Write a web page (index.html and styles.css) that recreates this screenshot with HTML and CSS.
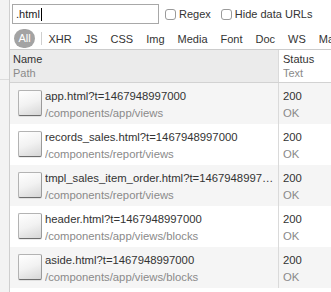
FILE: index.html
```html
<!DOCTYPE html>
<html>
<head>
<meta charset="utf-8">
<link rel="stylesheet" href="styles.css">
</head>
<body>
<div class="sidebar"><div class="sidebar-top"></div></div>
<div class="main">
  <div class="toolbar">
    <div class="search-row">
      <div class="search-input">.html<span class="caret"></span></div>
      <label class="check"><span class="box"></span>Regex</label>
      <label class="check"><span class="box"></span>Hide data URLs</label>
    </div>
    <div class="filter-row">
      <span class="pill">All</span>
      <span class="sep"></span>
      <span class="filter">XHR</span>
      <span class="filter">JS</span>
      <span class="filter">CSS</span>
      <span class="filter">Img</span>
      <span class="filter">Media</span>
      <span class="filter">Font</span>
      <span class="filter">Doc</span>
      <span class="filter">WS</span>
      <span class="filter">Manifest</span>
    </div>
  </div>
  <div class="table">
    <div class="head">
      <div class="hcell-name"><div class="primary">Name</div><div class="secondary">Path</div></div>
      <div class="hcell-status"><div class="primary">Status</div><div class="secondary">Text</div></div>
    </div>
    <div class="row odd">
      <div class="cell-name"><span class="icon"></span><div class="texts"><div class="primary">app.html?t=1467948997000</div><div class="secondary">/components/app/views</div></div></div>
      <div class="cell-status"><div class="primary">200</div><div class="secondary">OK</div></div>
    </div>
    <div class="row">
      <div class="cell-name"><span class="icon"></span><div class="texts"><div class="primary">records_sales.html?t=1467948997000</div><div class="secondary">/components/report/views</div></div></div>
      <div class="cell-status"><div class="primary">200</div><div class="secondary">OK</div></div>
    </div>
    <div class="row odd">
      <div class="cell-name"><span class="icon"></span><div class="texts"><div class="primary">tmpl_sales_item_order.html?t=1467948997000</div><div class="secondary">/components/report/views</div></div></div>
      <div class="cell-status"><div class="primary">200</div><div class="secondary">OK</div></div>
    </div>
    <div class="row">
      <div class="cell-name"><span class="icon"></span><div class="texts"><div class="primary">header.html?t=1467948997000</div><div class="secondary">/components/app/views/blocks</div></div></div>
      <div class="cell-status"><div class="primary">200</div><div class="secondary">OK</div></div>
    </div>
    <div class="row odd">
      <div class="cell-name"><span class="icon"></span><div class="texts"><div class="primary">aside.html?t=1467948997000</div><div class="secondary">/components/app/views/blocks</div></div></div>
      <div class="cell-status"><div class="primary">200</div><div class="secondary">OK</div></div>
    </div>
  </div>
</div>
</body>
</html>
```
FILE: styles.css
```css
html, body {
  margin: 0;
  padding: 0;
  height: 292px;
  overflow: hidden;
  background: #fff;
}
body {
  display: flex;
  font-family: "Liberation Sans", Arial, sans-serif;
  font-size: 11px;
  color: #333;
}
.sidebar {
  width: 9px;
  flex: none;
  background: #f3f3f3;
  border-right: 1px solid #cfcfcf;
}
.sidebar-top {
  height: 79px;
  border-bottom: 1px solid #dcdcdc;
}
.main {
  flex: 1;
  min-width: 0;
  overflow: hidden;
}
.toolbar {
  padding: 4px 0 0 2px;
  height: 49px;
  box-sizing: border-box;
}
.search-row {
  display: flex;
  align-items: center;
  height: 20px;
  white-space: nowrap;
}
.search-input {
  width: 147px;
  height: 20px;
  box-sizing: border-box;
  border: 1px solid #a8a8a8;
  padding: 0 3px;
  font-size: 11px;
  line-height: 18px;
  color: #222;
  display: flex;
  align-items: center;
}
.caret {
  display: inline-block;
  width: 1px;
  height: 13px;
  background: #000;
  margin-left: 1px;
}
.check {
  display: flex;
  align-items: center;
  color: #333;
  margin-left: 6px;
}
.check + .check {
  margin-left: 10px;
}
.box {
  width: 11px;
  height: 11px;
  box-sizing: border-box;
  border: 1px solid #9a9a9a;
  border-radius: 3px;
  background: #fff;
  margin-right: 3px;
}
.filter-row {
  display: flex;
  align-items: center;
  margin-top: 5px;
  height: 19px;
  padding-left: 2px;
  white-space: nowrap;
}
.pill {
  width: 21px;
  height: 19px;
  border-radius: 10px;
  background: #a3a3a3;
  color: #fff;
  text-align: center;
  line-height: 19px;
  flex: none;
}
.sep {
  width: 1px;
  height: 13px;
  background: #cfcfcf;
  margin-left: 6px;
  flex: none;
}
.filter {
  padding: 0 6.5px;
  color: #333;
  flex: none;
}
.table {
  border-top: 1px solid #cccccc;
}
.head {
  display: flex;
  height: 32px;
  border-bottom: 1px solid #d2d2d2;
}
.hcell-name {
  width: 268px;
  flex: none;
  box-sizing: border-box;
  background: #ebebeb;
  padding: 2px 0 0 3px;
  line-height: 14px;
}
.hcell-status {
  flex: 1;
  border-left: 1px solid #dadada;
  padding: 2px 0 0 4px;
  line-height: 14px;
  background: #fff;
}
.primary {
  color: #333;
  white-space: nowrap;
  overflow: hidden;
  text-overflow: ellipsis;
}
.secondary {
  color: #8a8a8a;
  white-space: nowrap;
  overflow: hidden;
  text-overflow: ellipsis;
}
.row {
  display: flex;
  height: 41px;
  background: #fff;
}
.row.odd {
  background: #f5f5f5;
}
.cell-name {
  width: 268px;
  flex: none;
  box-sizing: border-box;
  display: flex;
  align-items: flex-start;
  padding: 7px 1px 0 8px;
  font-size: 11.3px;
}
.icon {
  width: 24px;
  height: 26px;
  box-sizing: border-box;
  flex: none;
  border: 1px solid #b3b3b3;
  border-bottom: 1px solid #6d6d6d;
  border-right-color: #9a9a9a;
  border-radius: 2px;
  background: linear-gradient(160deg, #ffffff 0%, #f2f2f2 50%, #d6d6d6 100%);
  box-shadow: 0 1px 0 rgba(0,0,0,0.08);
}
.texts {
  min-width: 0;
  flex: 1;
  margin-left: 3px;
  margin-top: -2px;
  line-height: 17px;
}
.cell-status {
  flex: 1;
  border-left: 1px solid #dadada;
  padding: 5px 0 0 4px;
  line-height: 17px;
  font-size: 11.3px;
}
```
